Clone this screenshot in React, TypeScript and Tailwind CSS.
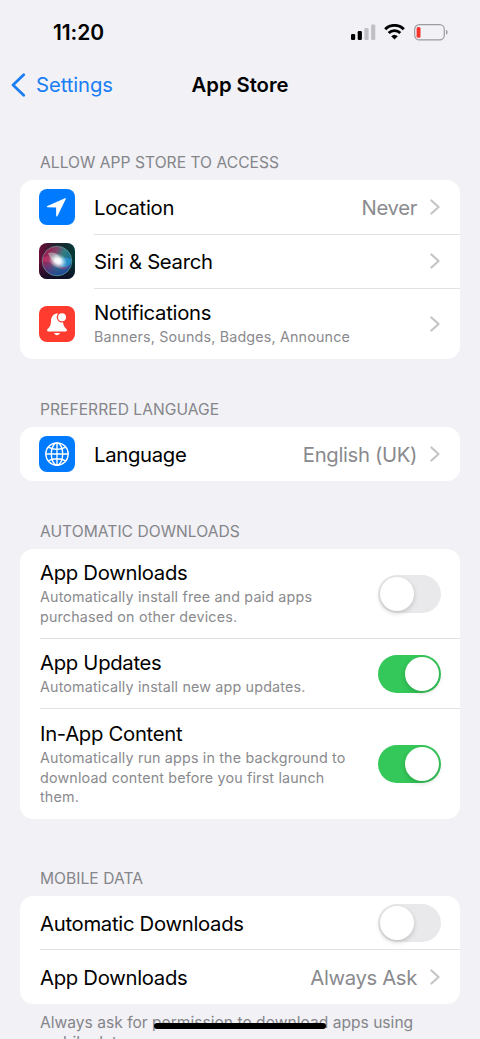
import type { ReactNode } from 'react';

function Chevron() {
  return (
    <svg width="10" height="16" viewBox="0 0 10 16" fill="none" className="ml-[13px] shrink-0">
      <path d="M1.4 1.4 8.6 8l-7.2 6.6" stroke="#c4c4c7" strokeWidth="2.1" strokeLinecap="round" strokeLinejoin="round" />
    </svg>
  );
}

function Toggle({ on }: { on?: boolean }) {
  return (
    <div
      className={`-mr-px flex h-[38px] w-[63px] shrink-0 items-center rounded-full px-0.5 ${
        on ? 'justify-end bg-[#34c759]' : 'justify-start bg-[#e9e9eb]'
      }`}
    >
      <div className="h-[34px] w-[34px] rounded-full bg-white shadow-[0_2px_5px_rgba(0,0,0,0.18)]" />
    </div>
  );
}

function Section({ title, className, children }: { title: string; className: string; children: ReactNode }) {
  return (
    <section className={className}>
      <h2 className="h-[27px] px-5 text-[15.6px] leading-[19px] tracking-[0.03px] text-[#85858a]">{title}</h2>
      <div className="overflow-hidden rounded-[13px] bg-white">{children}</div>
    </section>
  );
}

type RowProps = {
  height: string;
  label: ReactNode;
  detail?: ReactNode;
  icon?: ReactNode;
  value?: ReactNode;
  toggle?: boolean;
  on?: boolean;
  last?: boolean;
};

function Row({ height, label, detail, icon, value, toggle, on, last }: RowProps) {
  return (
    <div className={`flex items-center pl-5 ${height}`}>
      {icon && <div className="mr-[18px] h-9 w-9 shrink-0 -translate-x-px">{icon}</div>}
      <div className={`flex h-full min-w-0 flex-1 items-center pr-5 ${last ? '' : 'border-b border-[#e2e2e4]'}`}>
        <div className={detail ? 'flex-1' : 'flex-1 pt-0.5'}>
          <div className="text-[20.3px] leading-[26px] tracking-[-0.3px] whitespace-nowrap text-black">{label}</div>
          {detail && (
            <div className="mt-px text-[14.3px] leading-[19.7px] tracking-[0.17px] whitespace-nowrap text-[#8a8a8e]">
              {detail}
            </div>
          )}
        </div>
        {value && (
          <span className="pt-0.5 text-[20.3px] leading-[26px] tracking-[-0.35px] text-[#8a8a8e]">{value}</span>
        )}
        {toggle ? <Toggle on={on} /> : <Chevron />}
      </div>
    </div>
  );
}

function LocationIcon() {
  return (
    <svg width="36" height="36" viewBox="0 0 36 36">
      <rect width="36" height="36" rx="8" fill="#007aff" />
      <path
        d="M26 9.3 8.4 17.1c-.9.4-.7 1.2.2 1.2l8.1.1c.3 0 .4.1.4.4l.1 8c0 .9.9 1.1 1.3.2L26.8 10c.3-.6-.2-1-.8-.7Z"
        fill="#fff"
      />
    </svg>
  );
}

function SiriIcon() {
  return (
    <svg width="36" height="36" viewBox="0 0 36 36" className="-translate-y-px">
      <defs>
        <linearGradient id="siri-bg" x1="0" y1="0" x2="1" y2="0">
          <stop offset="0" stopColor="#6b0c38" />
          <stop offset=".5" stopColor="#20232e" />
          <stop offset="1" stopColor="#033936" />
        </linearGradient>
        <linearGradient id="siri-shade" x1="0" y1="0" x2="0" y2="1">
          <stop offset=".5" stopColor="#0b0a26" stopOpacity="0" />
          <stop offset="1" stopColor="#0b0a26" stopOpacity=".85" />
        </linearGradient>
        <linearGradient id="siri-orb" x1="0" y1=".3" x2="1" y2=".7">
          <stop offset="0" stopColor="#b4184f" />
          <stop offset=".35" stopColor="#a84c7d" />
          <stop offset=".6" stopColor="#3b9b9b" />
          <stop offset="1" stopColor="#126fc0" />
        </linearGradient>
        <linearGradient id="siri-low" x1="0" y1="0" x2="0" y2="1">
          <stop offset=".5" stopColor="#26389b" stopOpacity="0" />
          <stop offset="1" stopColor="#1f3c98" />
        </linearGradient>
        <radialGradient id="siri-glow">
          <stop offset="0" stopColor="#fff" />
          <stop offset=".35" stopColor="#fff" stopOpacity=".9" />
          <stop offset="1" stopColor="#bdeef4" stopOpacity="0" />
        </radialGradient>
      </defs>
      <rect width="36" height="36" rx="8" fill="url(#siri-bg)" />
      <rect width="36" height="36" rx="8" fill="url(#siri-shade)" />
      <circle cx="18" cy="18" r="14.8" fill="url(#siri-orb)" opacity=".75" />
      <circle cx="18" cy="18" r="14.8" fill="url(#siri-low)" opacity=".8" />
      <path d="M3.5 15c5-3 10-2 16 4 4 4 8 5 11 3-2 5-7 6-12 2C12 19 8 18 3.5 19Z" fill="#d9427e" opacity=".4" />
      <path d="M18 18c5-5 11-4 14.5-1-1 6-6 9-11 6Z" fill="#2c9ce0" opacity=".7" />
      <path d="M9 10c6-2 12 1 13 8-6 2-10 0-13-8Z" fill="#c3d1c8" opacity=".55" />
      <ellipse cx="19" cy="18" rx="9.5" ry="7.5" transform="rotate(25 19 18)" fill="url(#siri-glow)" />
      <circle cx="18" cy="18" r="14.8" fill="none" stroke="#6aa9a3" strokeWidth=".9" opacity=".7" />
    </svg>
  );
}

function BellIcon() {
  return (
    <svg width="36" height="36" viewBox="0 0 36 36">
      <rect width="36" height="36" rx="8" fill="#ff3b30" />
      <path
        d="M18 7.6c-3.9.6-5.9 3.5-6 7.5-.1 3.9-.9 5.4-2.9 7.3-1.8 1.7-1.1 3 .7 3h16.4c1.8 0 2.5-1.3.7-3-2-1.9-2.8-3.4-2.9-7.3 0-4-2.1-6.9-6-7.5Z"
        fill="#fff"
      />
      <path d="M15.1 27.1h5.8c-.5 1.4-1.5 2.1-2.9 2.1s-2.4-.7-2.9-2.1Z" fill="#fff" />
      <circle cx="23" cy="11.3" r="5.3" fill="#ff3b30" />
      <circle cx="23" cy="11.3" r="4" fill="#fff" />
    </svg>
  );
}

function GlobeIcon() {
  return (
    <svg width="36" height="36" viewBox="0 0 36 36">
      <rect width="36" height="36" rx="8" fill="#007aff" />
      <g fill="none" stroke="#fff" strokeWidth="1.35">
        <circle cx="18" cy="18" r="11.2" />
        <ellipse cx="18" cy="18" rx="5.7" ry="11.2" />
        <path d="M18 6.8v22.4M6.8 18h22.4M9.3 11.2c5 2.8 12.4 2.8 17.4 0M9.3 24.8c5-2.8 12.4-2.8 17.4 0" />
      </g>
    </svg>
  );
}

function StatusBar() {
  return (
    <div className="flex h-16 items-center justify-between pr-8 pl-[53px]">
      <span className="pt-0.5 text-[21px] leading-6 font-semibold tracking-[-0.1px] text-black">11:20</span>
      <div className="flex items-center">
        <svg width="25" height="17" viewBox="0 0 25 17">
          <rect x="0" y="10" width="4.2" height="6" rx="1.2" />
          <rect x="6.7" y="7" width="4.2" height="9" rx="1.2" />
          <rect x="13.4" y="4" width="4.2" height="12" rx="1.2" fill="#c1c1c5" />
          <rect x="20.1" y="0.5" width="4.2" height="15.5" rx="1.2" fill="#c1c1c5" />
        </svg>
        <svg width="21" height="16" viewBox="0 0 21 16" className="ml-2">
          <path d="M1.2 5.2a13.2 13.2 0 0 1 18.6 0M4.7 9a8.2 8.2 0 0 1 11.6 0" fill="none" stroke="#000" strokeWidth="2.9" />
          <path d="M10.5 15.6 7.2 12.2a4.8 4.8 0 0 1 6.6 0Z" />
        </svg>
        <svg width="34" height="17" viewBox="0 0 34 17" className="ml-[9px]">
          <rect x=".7" y=".7" width="29.6" height="15.2" rx="4.6" fill="none" stroke="#9c9ca0" strokeWidth="1.2" />
          <rect x="2.6" y="2.9" width="3.9" height="10.8" rx="1.5" fill="#f5332c" />
          <path d="M32 5.8v5c1-.4 1.6-1.4 1.6-2.5S33 6.2 32 5.8Z" fill="#9c9ca0" />
        </svg>
      </div>
    </div>
  );
}

export default function App() {
  return (
    <div className="relative h-[1039px] w-[480px] overflow-hidden bg-[#f1f1f6] font-['Inter','Liberation_Sans',sans-serif]">
      <StatusBar />
      <header className="grid h-[43px] grid-cols-[1fr_auto_1fr] items-center px-[11px] pb-0.5">
        <div className="flex items-center text-[#197df5]">
          <svg width="15" height="24" viewBox="0 0 15 24" fill="none">
            <path d="M12.7 1.8 2 12l10.7 10.2" stroke="currentColor" strokeWidth="2.7" strokeLinecap="round" strokeLinejoin="round" />
          </svg>
          <span className="ml-2.5 text-[20.3px] leading-6 tracking-[-0.1px]">Settings</span>
        </div>
        <h1 className="text-[20.3px] leading-6 font-semibold tracking-[-0.05px] text-black">App Store</h1>
      </header>

      <main className="px-5">
        <Section title="ALLOW APP STORE TO ACCESS" className="pt-[46px]">
          <Row height="h-[54.5px]" icon={<LocationIcon />} label="Location" value="Never" />
          <Row height="h-[54px]" icon={<SiriIcon />} label="Siri & Search" />
          <Row
            height="h-[70px]"
            icon={<BellIcon />}
            label="Notifications"
            detail="Banners, Sounds, Badges, Announce"
            last
          />
        </Section>

        <Section title="PREFERRED LANGUAGE" className="pt-[41.5px]">
          <Row height="h-[54px]" icon={<GlobeIcon />} label="Language" value="English (UK)" last />
        </Section>

        <Section title="AUTOMATIC DOWNLOADS" className="pt-[41px]">
          <Row
            height="h-[90px]"
            label="App Downloads"
            detail={<>Automatically install free and paid apps<br />purchased on other devices.</>}
            toggle
          />
          <Row height="h-[70px]" label="App Updates" detail="Automatically install new app updates." toggle on />
          <Row
            height="h-[110px]"
            label="In-App Content"
            detail={<>Automatically run apps in the background to<br />download content before you first launch<br />them.</>}
            toggle
            on
            last
          />
        </Section>

        <Section title="MOBILE DATA" className="pt-[50px]">
          <Row height="h-[54px]" label="Automatic Downloads" toggle />
          <Row height="h-[54px]" label="App Downloads" value="Always Ask" last />
        </Section>
        <p className="mt-[9px] px-5 text-[15.6px] leading-5 whitespace-nowrap text-[#85858a]">
          Always ask for permission to download apps using
          <br />
          mobile data.
        </p>
      </main>

      <div className="absolute bottom-[10px] left-[154px] h-1.5 w-[172px] rounded-full bg-black" />
    </div>
  );
}
